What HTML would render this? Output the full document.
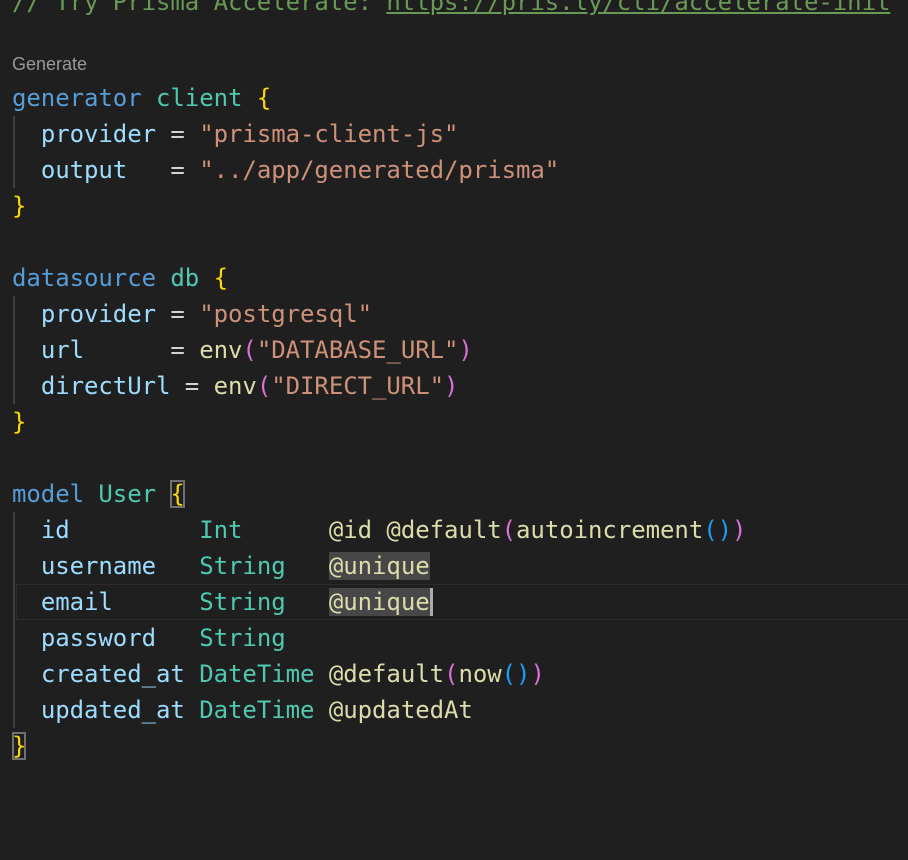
<!DOCTYPE html>
<html><head><style>
body{margin:0;width:908px;height:860px;background:#1f1f1f;overflow:hidden;position:relative;font-family:Menlo,"DejaVu Sans Mono","Liberation Mono",monospace;}
.l{position:absolute;left:12px;height:36px;line-height:36px;font-size:24px;white-space:pre;color:#d4d4d4;font-family:"DejaVu Sans Mono","Liberation Mono",monospace;letter-spacing:-0.05px;}
.k{color:#569cd6}.t{color:#4ec9b0}.b{color:#ffd700}.s{color:#ce9178}.p{color:#9cdcfe}.f{color:#dcdcaa}.m{color:#da70d6}.n{color:#179fff}.c{color:#6a9955}
.g{position:absolute;left:13px;width:2px;background:#404040}
.sel{background:#474747}
.bx{outline:2px solid #707070;outline-offset:-2px}
</style></head><body>
<div class="l c" style="top:-16px">// Try Prisma Accelerate: <u>https://pris.ly/cli/accelerate-init</u></div>
<div style="position:absolute;left:12px;top:54px;font:18px 'Liberation Sans',sans-serif;color:#999">Generate</div>
<div class="g" style="top:116px;height:72px"></div>
<div class="g" style="top:296px;height:108px"></div>
<div class="g" style="top:512px;height:216px"></div>
<div style="position:absolute;left:16px;right:0;top:584px;height:34px;border:1px solid #2c2c2c;border-right:none"></div>
<div class="l" style="top:80px"><span class="k">generator</span> <span class="t">client</span> <span class="b">{</span></div>
<div class="l" style="top:116px">  <span class="p">provider</span> = <span class="s">"prisma-client-js"</span></div>
<div class="l" style="top:152px">  <span class="p">output</span>   = <span class="s">"../app/generated/prisma"</span></div>
<div class="l" style="top:188px"><span class="b">}</span></div>
<div class="l" style="top:260px"><span class="k">datasource</span> <span class="t">db</span> <span class="b">{</span></div>
<div class="l" style="top:296px">  <span class="p">provider</span> = <span class="s">"postgresql"</span></div>
<div class="l" style="top:332px">  <span class="p">url</span>      = <span class="f">env</span><span class="m">(</span><span class="s">"DATABASE_URL"</span><span class="m">)</span></div>
<div class="l" style="top:368px">  <span class="p">directUrl</span> = <span class="f">env</span><span class="m">(</span><span class="s">"DIRECT_URL"</span><span class="m">)</span></div>
<div class="l" style="top:404px"><span class="b">}</span></div>
<div class="l" style="top:476px"><span class="k">model</span> <span class="t">User</span> <span class="b bx">{</span></div>
<div class="l" style="top:512px">  <span class="p">id</span>         <span class="t">Int</span>      <span class="f">@id @default</span><span class="m">(</span><span class="f">autoincrement</span><span class="n">()</span><span class="m">)</span></div>
<div class="l" style="top:548px">  <span class="p">username</span>   <span class="t">String</span>   <span class="f sel">@unique</span></div>
<div class="l" style="top:584px">  <span class="p">email</span>      <span class="t">String</span>   <span class="f sel" style="border-right:3px solid #aaa">@unique</span></div>
<div class="l" style="top:620px">  <span class="p">password</span>   <span class="t">String</span></div>
<div class="l" style="top:656px">  <span class="p">created_at</span> <span class="t">DateTime</span> <span class="f">@default</span><span class="m">(</span><span class="f">now</span><span class="n">()</span><span class="m">)</span></div>
<div class="l" style="top:692px">  <span class="p">updated_at</span> <span class="t">DateTime</span> <span class="f">@updatedAt</span></div>
<div class="l" style="top:728px"><span class="b bx">}</span></div>
</body></html>
